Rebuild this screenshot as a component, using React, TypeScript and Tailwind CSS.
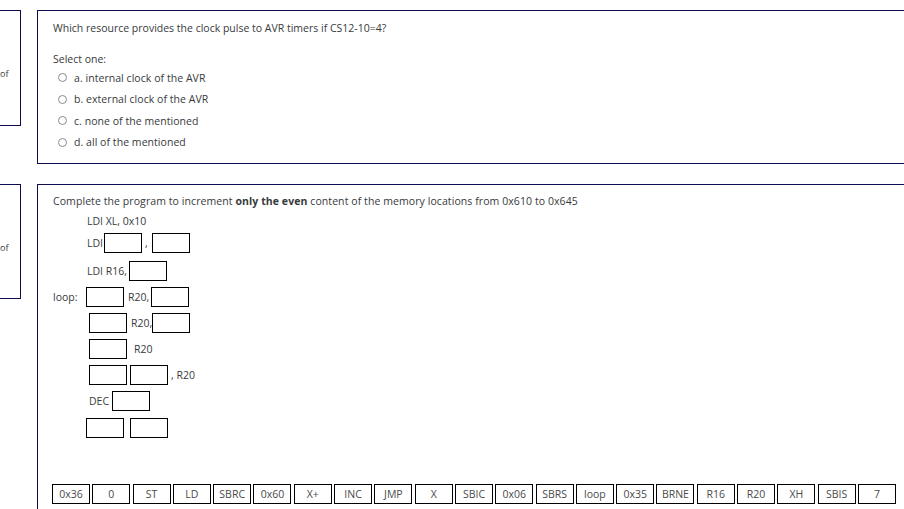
import React from 'react';

const options = [
  'a. internal clock of the AVR',
  'b. external clock of the AVR',
  'c. none of the mentioned',
  'd. all of the mentioned',
];

const tiles = [
  '0x36', '0', 'ST', 'LD', 'SBRC', '0x60', 'X+', 'INC', 'JMP', 'X', 'SBIC',
  '0x06', 'SBRS', 'loop', '0x35', 'BRNE', 'R16', 'R20', 'XH', 'SBIS', '7',
];

function Blank({ className = '' }: { className?: string }) {
  return <span className={`inline-block w-[38px] h-[20px] border border-black shrink-0 ${className}`} />;
}

export default function App() {
  return (
    <div
      className="w-[904px] h-[509px] overflow-hidden bg-white text-[#373a3c] text-[10.5px] leading-4"
      style={{ fontFamily: '"Open Sans", "Noto Sans", sans-serif' }}
    >
      {/* question 1 */}
      <div className="flex pt-[10px]">
        <div className="w-[21px] h-[116px] shrink-0 border-y border-r border-[#0c0c4f] pt-[55px] text-[9px]">
          of
        </div>
        <div className="ml-[16px] w-[900px] shrink-0 h-[154px] border border-[#0c0c4f] pl-[15px] pt-[9px]">
          <p>Which resource provides the clock pulse to AVR timers if CS12-10=4?</p>
          <p className="mt-[15px]">Select one:</p>
          {options.map((o) => (
            <div key={o} className="flex items-center h-[21.5px]">
              <span className="ml-[5px] w-[9px] h-[9px] rounded-full border border-[#8a8a8a]" />
              <span className="ml-[7px] tracking-[0.05px]">{o}</span>
            </div>
          ))}
        </div>
      </div>

      {/* question 2 */}
      <div className="flex mt-[20px]">
        <div className="w-[21px] h-[115px] shrink-0 border-y border-r border-[#0c0c4f] pt-[55px] text-[9px]">
          of
        </div>
        <div className="ml-[16px] w-[900px] shrink-0 h-[400px] border border-[#0c0c4f] pl-[15px] pt-[8px]">
          <p className="tracking-[0.08px]">
            Complete the program to increment <span className="font-bold">only the even</span> content of the
            memory locations from 0x610 to 0x645
          </p>
          <p className="mt-[4px] pl-[34px]">LDI XL, 0x10</p>
          <div className="mt-[4px] pl-[34px] flex items-center h-[20px]">
            <span>LDI</span>
            <Blank className="ml-[1px]" />
            <span className="ml-[3px]">,</span>
            <Blank className="ml-[4px]" />
          </div>
          <div className="mt-[8px] pl-[34px] flex items-center h-[20px]">
            <span>LDI R16,</span>
            <Blank className="ml-[2px]" />
          </div>
          <div className="mt-[6px] flex items-center h-[20px]">
            <span className="w-[33px]">loop:</span>
            <Blank />
            <span className="ml-[4px]">R20,</span>
            <Blank className="ml-[2px]" />
          </div>
          <div className="mt-[6px] pl-[36px] flex items-center h-[20px]">
            <Blank />
            <span className="ml-[4px]">R20,</span>
            <Blank />
          </div>
          <div className="mt-[6px] pl-[36px] flex items-center h-[20px]">
            <Blank />
            <span className="ml-[7px]">R20</span>
          </div>
          <div className="mt-[6px] pl-[36px] flex items-center h-[20px]">
            <Blank />
            <Blank className="ml-[3px]" />
            <span className="ml-[3px]">, R20</span>
          </div>
          <div className="mt-[6px] pl-[36px] flex items-center h-[20px]">
            <span>DEC</span>
            <Blank className="ml-[3px]" />
          </div>
          <div className="mt-[7px] pl-[33px] flex items-center h-[20px]">
            <Blank />
            <Blank className="ml-[6px]" />
          </div>
          <div className="mt-[46px] -ml-px flex gap-[2.3px]">
            {tiles.map((t) => (
              <span
                key={t}
                className="w-[38px] h-[20px] shrink-0 border border-black flex items-center justify-center text-[#4a4a4a]"
              >
                {t}
              </span>
            ))}
          </div>
        </div>
      </div>
    </div>
  );
}
